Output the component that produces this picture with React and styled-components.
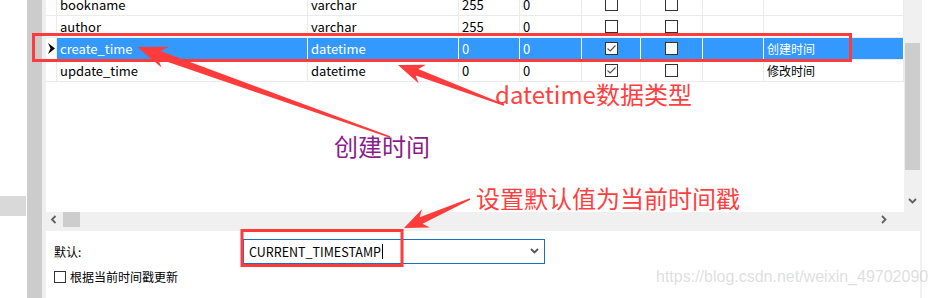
import React from 'react'
import styled, { createGlobalStyle } from 'styled-components'

const Global = createGlobalStyle`
  html, body { margin: 0; padding: 0; background: #fff; overflow: hidden; }
  * { box-sizing: border-box; }
`

const Page = styled.div`
  position: relative;
  width: 937px;
  height: 298px;
  display: flex;
  background: #fff;
  font-family: "Noto Sans CJK SC", "Noto Sans", sans-serif;
  overflow: hidden;
`

const Gutter = styled.div`
  width: 27px;
  padding-top: 196px;
`

const GutterBox = styled.div`
  width: 26px;
  height: 20px;
  background: #d9d9d9;
`

const Strip = styled.div`
  width: 15px;
  background: #cccccc;
`

const Edge = styled.div`
  width: 4px;
  background: #efefef;
`

const Main = styled.div`
  width: 876px;
  display: flex;
  flex-direction: column;
  border-right: 2px solid #f0f0f0;
`

const Upper = styled.div`
  height: 212px;
  display: flex;
`

const GridWrap = styled.div`
  width: 858px;
  overflow: hidden;
`

const Grid = styled.div`
  margin-top: -6px;
  display: grid;
  grid-template-columns: 11px 251px 151px 61px 62px 59px 62px 61px 140px;
`

const Cell = styled.div`
  height: 22px;
  display: flex;
  align-items: center;
  justify-content: ${p => (p.$center ? 'center' : 'flex-start')};
  padding-left: ${p => (p.$center ? 0 : 3)}px;
  border-right: 1px solid ${p => (p.$sel ? '#ffffff' : '#ebebeb')};
  border-bottom: 1px solid #ebebeb;
  background: ${p => (p.$sel ? '#3399ff' : '#fff')};
  color: ${p => (p.$sel ? '#fff' : '#000')};
  font-size: ${p => (p.$cjk ? 12 : 13)}px;
  white-space: nowrap;
`

const MarkerCell = styled(Cell)`
  background: #fff;
  border-right: 1px solid #ebebeb;
  padding-left: 2px;
`

const Box = styled.span`
  width: 13px;
  height: 13px;
  border: 1px solid #333;
  background: #fff;
  display: flex;
  align-items: center;
  justify-content: center;
`

const VScroll = styled.div`
  width: 16px;
  background: #f0f0f0;
  display: flex;
  flex-direction: column;
  align-items: center;
  padding-top: 43px;
`

const VThumb = styled.div`
  width: 15px;
  height: 127px;
  background: #cdcdcd;
`

const VArrow = styled.div`
  margin-top: 26px;
  height: 10px;
  display: flex;
  align-items: center;
`

const HScroll = styled.div`
  height: 19px;
  background: #f0f0f0;
  display: flex;
  align-items: flex-start;
  padding-right: 27px;
`

const HArrow = styled.div`
  width: 17px;
  height: 15px;
  display: flex;
  align-items: center;
  justify-content: center;
`

const HThumb = styled.div`
  width: 17px;
  height: 15px;
  background: #cdcdcd;
`

const Spacer = styled.div`
  flex: 1;
`

const Lower = styled.div`
  flex: 1;
  padding: 8px 0 0 8px;
  font-size: 12px;
  color: #000;
`

const FieldRow = styled.div`
  display: flex;
  align-items: center;
  height: 25px;
`

const Label = styled.div`
  width: 189px;
`

const Combo = styled.div`
  width: 302px;
  height: 25px;
  border: 1px solid #1c6fc2;
  display: flex;
  align-items: center;
  padding: 0 5px;
  font-size: 12.5px;
`

const Caret = styled.span`
  display: inline-block;
  width: 1px;
  height: 15px;
  background: #000;
  margin-left: 1px;
`

const CheckRow = styled.div`
  display: flex;
  align-items: center;
  gap: 4px;
  margin-top: 4px;
`

const SmallBox = styled.span`
  width: 12px;
  height: 12px;
  border: 1px solid #333;
`

const Watermark = styled.div`
  position: absolute;
  left: 656px;
  top: 268px;
  font-family: "Liberation Sans", Arial, sans-serif;
  font-size: 16px;
  color: rgba(195, 195, 195, 0.55);
  white-space: nowrap;
`

const Note = styled.div`
  position: absolute;
  left: ${p => p.$x}px;
  top: ${p => p.$y}px;
  font-family: "Noto Sans CJK SC", sans-serif;
  font-size: 24px;
  line-height: 24px;
  color: ${p => p.$color};
  white-space: nowrap;
`

const Overlay = styled.svg`
  position: absolute;
  left: 0;
  top: 0;
  pointer-events: none;
`

const RED = '#ff3b3b'

const Check = () => (
  <svg width="11" height="11" viewBox="0 0 11 11">
    <path d="M1.5 5.5 L4.2 8 L9.5 2.5" fill="none" stroke="#555" strokeWidth="1.2" />
  </svg>
)

const Marker = () => (
  <svg width="7" height="11" viewBox="0 0 7 11">
    <path d="M0 0 L7 5.5 L0 11 L2.5 5.5 Z" fill="#000" />
  </svg>
)

const Chevron = ({ dir = 'down', color = '#606060' }) => {
  const d = {
    down: 'M1 2 L4.5 5.5 L8 2',
    left: 'M5.5 1 L2 4.5 L5.5 8',
    right: 'M2 1 L5.5 4.5 L2 8',
  }[dir]
  return (
    <svg width="9" height="9" viewBox="0 0 9 9">
      <path d={d} fill="none" stroke={color} strokeWidth="1.8" />
    </svg>
  )
}

const rows = [
  { name: 'bookname', type: 'varchar', len: '255', dec: '0', nn: false, key: false, comment: '' },
  { name: 'author', type: 'varchar', len: '255', dec: '0', nn: false, key: false, comment: '' },
  { name: 'create_time', type: 'datetime', len: '0', dec: '0', nn: true, key: false, comment: '创建时间', sel: true },
  { name: 'update_time', type: 'datetime', len: '0', dec: '0', nn: true, key: false, comment: '修改时间' },
]

// tapered annotation arrow, tip first
const arrowPoints = (tip, tail, headLen, headHalf, neckHalf, tailHalf) => {
  const dx = tail[0] - tip[0]
  const dy = tail[1] - tip[1]
  const len = Math.hypot(dx, dy)
  const ux = dx / len
  const uy = dy / len
  const nx = -uy
  const ny = ux
  const at = (d, w) => [tip[0] + ux * d + nx * w, tip[1] + uy * d + ny * w]
  const pts = [
    tip,
    at(headLen, headHalf),
    at(headLen * 0.78, neckHalf),
    [tail[0] + nx * tailHalf, tail[1] + ny * tailHalf],
    [tail[0] - nx * tailHalf, tail[1] - ny * tailHalf],
    at(headLen * 0.78, -neckHalf),
    at(headLen, -headHalf),
  ]
  return pts.map(p => p.map(v => v.toFixed(1)).join(',')).join(' ')
}

const App = () => {
  return (
    <>
      <Global />
      <Page>
        <Gutter>
          <GutterBox />
        </Gutter>
        <Strip />
        <Edge />
        <Main>
          <Upper>
            <GridWrap>
              <Grid>
                {rows.map(r => (
                  <React.Fragment key={r.name}>
                    <MarkerCell>{r.sel && <Marker />}</MarkerCell>
                    <Cell $sel={r.sel}>{r.name}</Cell>
                    <Cell $sel={r.sel}>{r.type}</Cell>
                    <Cell $sel={r.sel}>{r.len}</Cell>
                    <Cell $sel={r.sel}>{r.dec}</Cell>
                    <Cell $sel={r.sel} $center>
                      <Box>{r.nn && <Check />}</Box>
                    </Cell>
                    <Cell $sel={r.sel} $center>
                      <Box>{r.key && <Check />}</Box>
                    </Cell>
                    <Cell $sel={r.sel} />
                    <Cell $sel={r.sel} $cjk>{r.comment}</Cell>
                  </React.Fragment>
                ))}
              </Grid>
            </GridWrap>
            <VScroll>
              <VThumb />
              <VArrow>
                <Chevron dir="down" />
              </VArrow>
            </VScroll>
          </Upper>
          <HScroll>
            <HArrow>
              <Chevron dir="left" />
            </HArrow>
            <HThumb />
            <Spacer />
            <HArrow>
              <Chevron dir="right" />
            </HArrow>
          </HScroll>
          <Lower>
            <FieldRow>
              <Label>默认:</Label>
              <Combo>
                CURRENT_TIMESTAMP
                <Caret />
                <Spacer />
                <Chevron dir="down" color="#555" />
              </Combo>
            </FieldRow>
            <CheckRow>
              <SmallBox />
              <span>根据当前时间戳更新</span>
            </CheckRow>
          </Lower>
        </Main>

        <Overlay width="937" height="298" viewBox="0 0 937 298">
          <rect x="33.5" y="34.5" width="817" height="26" fill="none" stroke={RED} strokeWidth="3" />
          <rect x="242" y="230.5" width="160" height="35" fill="none" stroke={RED} strokeWidth="3" />
          <polygon points={arrowPoints([137, 47], [390, 137], 30, 11, 4, 0.8)} fill={RED} />
          <polygon points={arrowPoints([398, 65], [504, 105], 26, 10, 3.5, 0.8)} fill={RED} />
          <polygon points={arrowPoints([404, 228], [470, 199], 24, 10, 3.5, 0.8)} fill={RED} />
        </Overlay>

        <Note $x={334} $y={134} $color="#8b1c8b">创建时间</Note>
        <Note $x={495} $y={82} $color="#ff4040">datetime数据类型</Note>
        <Note $x={476} $y={186} $color="#ff4040">设置默认值为当前时间戳</Note>
        <Watermark>https://blog.csdn.net/weixin_49702090</Watermark>
      </Page>
    </>
  )
}

export default App
